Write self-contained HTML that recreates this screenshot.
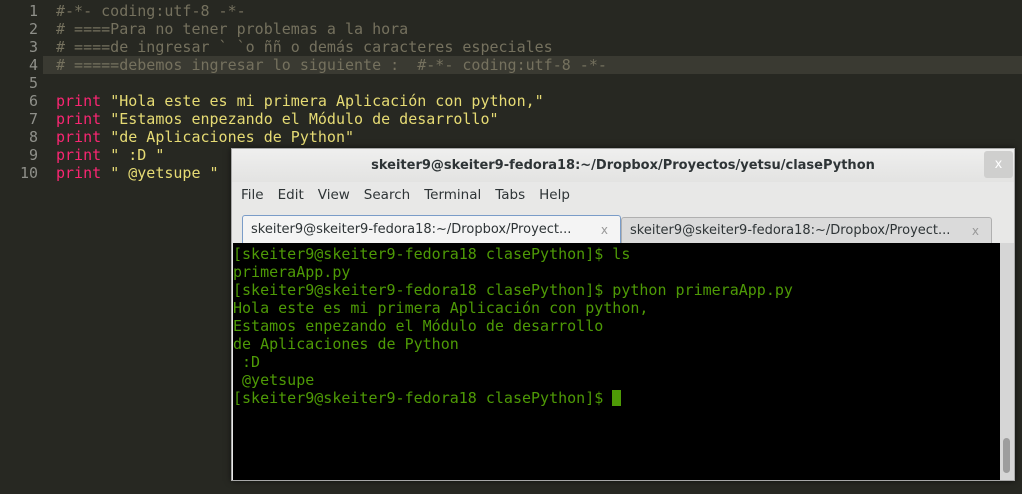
<!DOCTYPE html>
<html><head><meta charset="utf-8"><style>
body{margin:0;width:1022px;height:494px;background:#272822;position:relative;overflow:hidden;font-family:"DejaVu Sans Mono",monospace}
.ed{position:absolute;left:0;top:2px;width:1022px}
.l{height:18px;line-height:18px;font-size:15px;white-space:pre;position:relative}
.n{position:absolute;left:0;width:38px;text-align:right;color:#8f908a}
.c{position:absolute;left:56px;color:#75715e}
.k{color:#f92672}.s{color:#e6db74}
.hl{background:#3a3a32}
.win{position:absolute;left:231px;top:148px;width:782px;height:331px;background:#e8e8e7;border:1px solid #a8a8a8;box-shadow:0 0 6px rgba(0,0,0,.6);font-family:"DejaVu Sans",sans-serif}
.title{position:absolute;top:0;left:0;right:0;height:33px;line-height:33px;text-align:center;font-size:13px;font-weight:bold;color:#2e3436;background:linear-gradient(#efefee,#e3e3e2)}
.x{position:absolute;right:1px;top:2px;width:29px;height:27px;background:#cfcfce;border-radius:3px;color:#fff;text-align:center;line-height:27px;font-size:13px}
.menu{position:absolute;top:38px;left:9px;font-size:13.5px;color:#2e3436}
.menu span{margin-right:14px}
.tab{position:absolute;top:66px;height:28px;line-height:28px;font-size:13px;color:#2e3436;padding-left:8px;box-sizing:border-box;border:1px solid #b0b0b0;border-bottom:none;border-radius:3px 3px 0 0}
.tab i{position:absolute;right:12px;font-style:normal;color:#999;font-size:12px}
.term{position:absolute;left:1px;top:94px;width:767px;height:237px;background:#000;color:#4e9a06;font-family:"DejaVu Sans Mono",monospace;font-size:15px;line-height:18px;white-space:pre;padding-top:2px;box-sizing:border-box}
.sb{position:absolute;left:768px;top:94px;width:14px;height:237px;background:#d6d6d6}
.th{position:absolute;left:3px;top:195px;width:7px;height:35px;border-radius:4px;background:#9d9d9d}
.cur{display:inline-block;width:9px;height:16px;background:#4e9a06;vertical-align:-3px}
</style></head><body>
<div class="ed">
<div class="l"><span class="n">1</span><span class="c">#-*- coding:utf-8 -*-</span></div>
<div class="l"><span class="n">2</span><span class="c"># ====Para no tener problemas a la hora</span></div>
<div class="l"><span class="n">3</span><span class="c"># ====de ingresar ` `o ññ o demás caracteres especiales</span></div>
<div class="l hl" style="margin-left:43px"><span class="n" style="left:-43px">4</span><span class="c" style="left:13px"># =====debemos ingresar lo siguiente :  #-*- coding:utf-8 -*-</span></div>
<div class="l"><span class="n">5</span></div>
<div class="l"><span class="n">6</span><span class="c"><span class="k">print</span> <span class="s">"Hola este es mi primera Aplicación con python,"</span></span></div>
<div class="l"><span class="n">7</span><span class="c"><span class="k">print</span> <span class="s">"Estamos enpezando el Módulo de desarrollo"</span></span></div>
<div class="l"><span class="n">8</span><span class="c"><span class="k">print</span> <span class="s">"de Aplicaciones de Python"</span></span></div>
<div class="l"><span class="n">9</span><span class="c"><span class="k">print</span> <span class="s">" :D "</span></span></div>
<div class="l"><span class="n">10</span><span class="c"><span class="k">print</span> <span class="s">" @yetsupe "</span></span></div>
</div>
<div class="win">
<div class="title">skeiter9@skeiter9-fedora18:~/Dropbox/Proyectos/yetsu/clasePython</div>
<div class="x">x</div>
<div class="menu"><span>File</span><span>Edit</span><span>View</span><span>Search</span><span>Terminal</span><span>Tabs</span><span>Help</span></div>
<div class="tab" style="left:10px;width:379px;background:#f4f4f4;border-color:#7a9cc8">skeiter9@skeiter9-fedora18:~/Dropbox/Proyect...<i>x</i></div>
<div class="tab" style="left:389px;width:371px;background:#dadada;top:68px;height:26px;line-height:26px">skeiter9@skeiter9-fedora18:~/Dropbox/Proyect...<i>x</i></div>
<div class="term">[skeiter9@skeiter9-fedora18 clasePython]$ ls
primeraApp.py
[skeiter9@skeiter9-fedora18 clasePython]$ python primeraApp.py
Hola este es mi primera Aplicación con python,
Estamos enpezando el Módulo de desarrollo
de Aplicaciones de Python
 :D
 @yetsupe
[skeiter9@skeiter9-fedora18 clasePython]$ <span class="cur"></span></div>
<div class="sb"><div class="th"></div></div>
</div>
</body></html>
